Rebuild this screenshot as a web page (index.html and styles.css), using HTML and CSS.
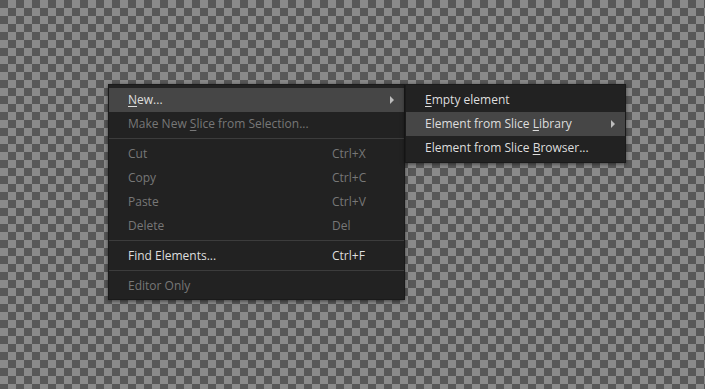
FILE: index.html
```html
<!DOCTYPE html>
<html>
<head>
<meta charset="utf-8">
<link rel="stylesheet" href="styles.css">
</head>
<body>
<div class="canvas">
  <div class="menu main-menu">
    <div class="item active"><span class="label"><u>N</u>ew...</span><span class="arrow"></span></div>
    <div class="item disabled"><span class="label">Make New <u>S</u>lice from Selection...</span></div>
    <div class="sep"></div>
    <div class="item disabled"><span class="label">Cut</span><span class="key">Ctrl+X</span></div>
    <div class="item disabled"><span class="label">Copy</span><span class="key">Ctrl+C</span></div>
    <div class="item disabled"><span class="label">Paste</span><span class="key">Ctrl+V</span></div>
    <div class="item disabled"><span class="label">Delete</span><span class="key">Del</span></div>
    <div class="sep"></div>
    <div class="item"><span class="label">Find Elements...</span><span class="key">Ctrl+F</span></div>
    <div class="sep"></div>
    <div class="item disabled"><span class="label">Editor Only</span></div>
  </div>
  <div class="menu sub-menu">
    <div class="item"><span class="label"><u>E</u>mpty element</span></div>
    <div class="item active"><span class="label">Element from Slice <u>L</u>ibrary</span><span class="arrow"></span></div>
    <div class="item"><span class="label">Element from Slice <u>B</u>rowser...</span></div>
  </div>
</div>
</body>
</html>
```
FILE: styles.css
```css
html, body {
  margin: 0;
  padding: 0;
  width: 705px;
  height: 389px;
  overflow: hidden;
}
.canvas {
  position: relative;
  width: 705px;
  height: 389px;
  background-color: #585858;
  background-image:
    linear-gradient(45deg, #8a8a8a 25%, transparent 25%, transparent 75%, #8a8a8a 75%),
    linear-gradient(45deg, #8a8a8a 25%, transparent 25%, transparent 75%, #8a8a8a 75%);
  background-size: 16px 16px;
  background-position: 0 0, 8px 8px;
  font-family: "Open Sans", "Noto Sans", sans-serif;
  font-size: 12px;
}
.menu {
  position: absolute;
  background: #222222;
  border: 1px solid #1a1a1a;
  box-shadow: 0 1px 4px rgba(0, 0, 0, 0.55);
  box-sizing: border-box;
  display: flex;
  flex-direction: column;
}
.main-menu {
  left: 108px;
  top: 84px;
  width: 297px;
  padding: 3px 0 1px;
}
.sub-menu {
  left: 405px;
  top: 84px;
  width: 221px;
  padding: 3px 0 2px;
}
.item {
  box-sizing: border-box;
  height: 24px;
  padding-bottom: 1px;
  display: flex;
  align-items: center;
  color: #dedede;
  padding-left: 19px;
  position: relative;
  white-space: nowrap;
}
.item.active {
  background: #464646;
}
.item.disabled {
  color: #777777;
}
.label u {
  text-decoration: underline;
  text-underline-offset: 2px;
}
.key {
  position: absolute;
  left: 223px;
}
.arrow {
  position: absolute;
  right: 10px;
  top: 8px;
  width: 0;
  height: 0;
  border-top: 4px solid transparent;
  border-bottom: 4px solid transparent;
  border-left: 4px solid #bdbdbd;
}
.sep {
  height: 1px;
  background: #3c3c3c;
  margin: 2px 0 3px;
}
```
